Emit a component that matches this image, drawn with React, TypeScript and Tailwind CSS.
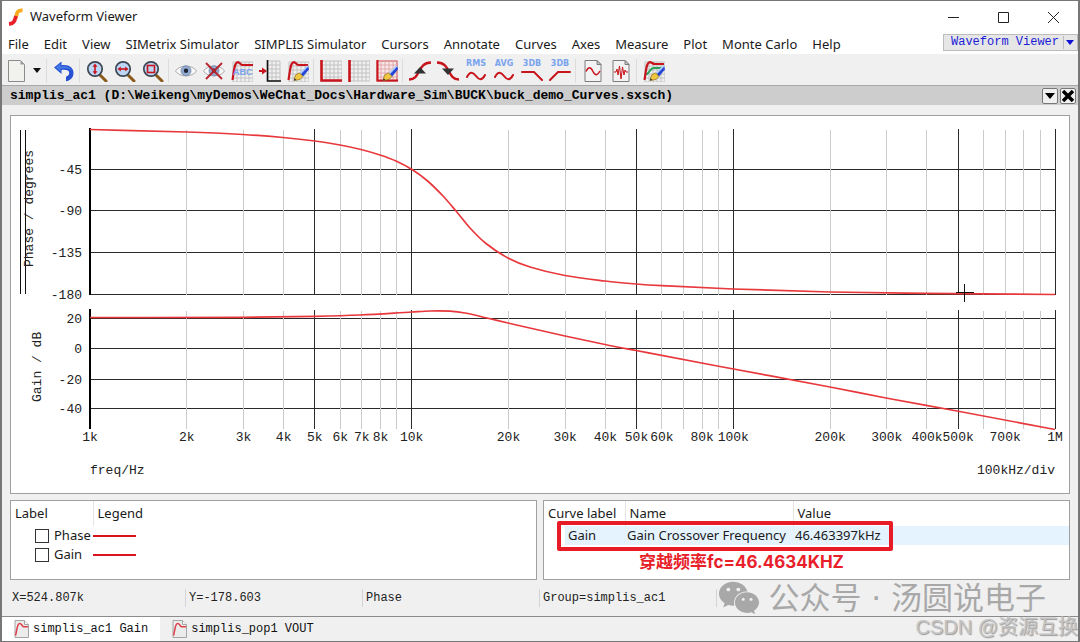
import React from 'react'
import { FaWeixin } from 'react-icons/fa'

const MENUS = [
  'File', 'Edit', 'View', 'SIMetrix Simulator', 'SIMPLIS Simulator', 'Cursors', 'Annotate',
  'Curves', 'Axes', 'Measure', 'Plot', 'Monte Carlo', 'Help',
]

const MONO = "font-['Liberation_Mono',monospace]"
const RED = '#c8141c'
const CURVE = '#e8383c'

/* ---------- toolbar icons, all on a 22x22 box ---------- */

function Icon({ children }: { children: React.ReactNode }) {
  return (
    <svg width="22" height="22" viewBox="0 0 22 22" fill="none">
      {children}
    </svg>
  )
}

function Grid({ x = 2, y = 2, w = 20, h = 20 }: { x?: number; y?: number; w?: number; h?: number }) {
  let d = ''
  for (let i = 0; i <= w; i += 4) d += `M${x + i} ${y}v${h}`
  for (let i = 0; i <= h; i += 4) d += `M${x} ${y + i}h${w}`
  return <path d={d} stroke="#c2c2c2" strokeWidth="1" />
}

function Pencil() {
  return (
    <g>
      <path d="M21 5.500 13 13.500l3 3 6-7z" fill="#2447d8" />
      <path d="M20 5.500 12.500 13l1.300 1.300 7.700-8z" fill="#b4ceff" />
      <path d="M12.500 12.800 8.500 15l-1.500 5.500 6-1 3-3z" fill="#f0c840" stroke="#8a6a20" strokeWidth=".7" />
      <path d="m7 20.500 2.400-.4-1.700-1.800z" fill="#333" />
    </g>
  )
}

function Magnifier({ children }: { children: React.ReactNode }) {
  return (
    <Icon>
      <path d="m14.500 15.500 5.500 5.500" stroke="#8a5a1c" strokeWidth="3" strokeLinecap="round" />
      <circle cx="9" cy="9" r="7.200" fill="#bcd6f5" stroke="#3c4650" strokeWidth="1.700" />
      {children}
    </Icon>
  )
}

function Eye() {
  return (
    <g>
      <path d="M.5 11c4-6.500 17-6.500 21 0c-4 6.500-17 6.500-21 0z" fill="#fafafa" stroke="#a9a9a9" strokeWidth="1" />
      <circle cx="11" cy="10.800" r="5" fill="#93abd2" stroke="#7487a8" strokeWidth=".8" />
      <circle cx="11" cy="10.800" r="2.200" fill="#1c2433" />
    </g>
  )
}

function Page({ children }: { children: React.ReactNode }) {
  return (
    <Icon>
      <path d="M3 .5h12l4 4v17H3z" fill="#f3f3f3" stroke="#7c7c7c" />
      <path d="M15 .5v4h4z" stroke="#7c7c7c" fill="#ccc" />
      {children}
    </Icon>
  )
}

function Tag({ text, children }: { text: string; children: React.ReactNode }) {
  return (
    <span className="flex h-[22px] w-[22px] flex-col items-center">
      <span className="font-['DejaVu_Sans',sans-serif] text-[8px] leading-[8px] font-bold text-[#7ba4ee]">{text}</span>
      <svg width="22" height="13" viewBox="0 0 22 13" fill="none" stroke={RED} strokeWidth="2" strokeLinecap="round">
        {children}
      </svg>
    </span>
  )
}

const SINE = 'M2 9c3-6 6-5 9-1s6 5 9-1'

const TOOL_GROUPS: { label: string; icon: React.ReactNode }[][] = [
  [
    {
      label: 'Undo',
      icon: (
        <Icon>
          <path d="M1 7.500 8.500 1.500v3.700C16 4.200 20.500 8 20.500 13c0 4.500-3 7.500-7.500 8.300v-4.600c2-.6 3.200-1.900 3.200-3.700 0-2.500-2.500-3.600-7.700-3v4z" fill="#2650d2" />
          <path d="M2.500 7.500 7.500 3.500v3C14 5.800 18 8 18.500 11 15 7.500 11 8.300 7.500 8.800v2.600z" fill="#4478e6" />
        </Icon>
      ),
    },
  ],
  [
    {
      label: 'Zoom Y',
      icon: (
        <Magnifier>
          <path d="M9 5.500v7" stroke={RED} strokeWidth="1.600" />
          <path d="M9 3.500 6.500 6.800h5zM9 14.500l-2.500-3.300h5z" fill={RED} />
        </Magnifier>
      ),
    },
    {
      label: 'Zoom X',
      icon: (
        <Magnifier>
          <path d="M5.500 9h7" stroke={RED} strokeWidth="1.600" />
          <path d="M3.500 9l3.300-2.500v5zM14.500 9l-3.300-2.500v5z" fill={RED} />
        </Magnifier>
      ),
    },
    {
      label: 'Zoom box',
      icon: (
        <Magnifier>
          <rect x="5.500" y="5.500" width="7" height="7" stroke={RED} strokeWidth="1.600" />
        </Magnifier>
      ),
    },
  ],
  [
    { label: 'Show', icon: <Icon><Eye /></Icon> },
    {
      label: 'Hide',
      icon: (
        <Icon>
          <Eye />
          <path d="m3 3 16 16M19 3 3 19" stroke="#b8242a" strokeWidth="1.800" />
        </Icon>
      ),
    },
    {
      label: 'Name curve',
      icon: (
        <Icon>
          <Grid />
          <path d="M1.500 20C3 12 3 3 6.500 2.200 9 2 9 5 12 5h10" stroke={RED} strokeWidth="2.200" />
          <text x="2" y="15" fontSize="9" fontWeight="700" fill="#7ba4ee" fontFamily="Liberation Sans, sans-serif">ABC</text>
        </Icon>
      ),
    },
    {
      label: 'Move curve',
      icon: (
        <Icon>
          <Grid x={9} y={1} w={12} h={20} />
          <path d="M8.500 0v21H22" stroke="#111" strokeWidth="1.600" />
          <path d="M0 11h4" stroke={RED} strokeWidth="2" />
          <path d="M3 7.500 8 11l-5 3.500z" fill={RED} />
        </Icon>
      ),
    },
    {
      label: 'Edit curve',
      icon: (
        <Icon>
          <Grid />
          <path d="M1.500 20C3 12 3 3 6.500 2.200 9 2 9 5 12 5h9" stroke={RED} strokeWidth="2.200" />
          <Pencil />
        </Icon>
      ),
    },
  ],
  [
    {
      label: 'Add axis',
      icon: (
        <Icon>
          <Grid y={1} />
          <path d="M1.500 0v20.500H22" stroke={RED} strokeWidth="2.600" />
        </Icon>
      ),
    },
    {
      label: 'Add Y axis',
      icon: (
        <Icon>
          <Grid y={1} />
          <path d="M1.500 0v22" stroke={RED} strokeWidth="2.600" />
        </Icon>
      ),
    },
    {
      label: 'Edit axis',
      icon: (
        <Icon>
          <rect x="1" y="1" width="20" height="20" fill="#f6e6e6" stroke="#cc4a50" />
          <path d="M5 1v20M9 1v20M13 1v20M17 1v20M1 5h20M1 9h20M1 13h20M1 17h20" stroke="#dfa0a2" strokeWidth=".8" />
          <path d="M1.500 0v20.500H22" stroke={RED} strokeWidth="2" />
          <Pencil />
        </Icon>
      ),
    },
  ],
  [
    {
      label: 'Rise time',
      icon: (
        <Icon>
          <path d="M0 19.500c12 0 8-17 22-17" stroke={RED} strokeWidth="2.400" />
          <path d="m11 7-6 6.500h12z" fill="#333" />
        </Icon>
      ),
    },
    {
      label: 'Fall time',
      icon: (
        <Icon>
          <path d="M0 2.500c14 0 10 17 22 17" stroke={RED} strokeWidth="2.400" />
          <path d="m11 15-6-6.500h12z" fill="#333" />
        </Icon>
      ),
    },
    { label: 'RMS', icon: <Tag text="RMS"><path d={SINE} /></Tag> },
    { label: 'Average', icon: <Tag text="AVG"><path d={SINE} /></Tag> },
    { label: 'Low pass 3dB', icon: <Tag text="3DB"><path d="M1 4h12l8 8" /></Tag> },
    { label: 'High pass 3dB', icon: <Tag text="3DB"><path d="M1 12l8-8h12" /></Tag> },
  ],
  [
    {
      label: 'Plot',
      icon: <Page><path d="M4 11.500c2.500-5 4.500-5 7 0s4.500 4 7-.5" stroke={RED} strokeWidth="1.500" /></Page>,
    },
    {
      label: 'Fourier',
      icon: <Page><path d="M4 12h2l1-3 1 6 1.500-9L11 19l1.500-12L14 15l1-5 1 2h2" stroke={RED} strokeWidth="1" /></Page>,
    },
  ],
  [
    {
      label: 'Edit curves',
      icon: (
        <Icon>
          <Grid />
          <path d="M2 14c4 2 4-6 9-6h10" stroke="#27a35a" strokeWidth="2" />
          <path d="M1.500 20C3 12 3 3 6.500 2.200 9 2 9 4 12 4h9" stroke={RED} strokeWidth="2.200" />
          <Pencil />
        </Icon>
      ),
    },
  ],
]

function Toolbar() {
  return (
    <div className="flex h-[31px] items-center bg-[#f0f0f0] pt-0.5 pl-1">
      <button aria-label="New" className="w-[22px]">
        <svg width="22" height="22" viewBox="0 0 22 22" fill="none">
          <path d="M2.500 .5h12l4 4v17h-16z" fill="#f1f1ee" stroke="#8b8b8b" />
          <path d="M14.500 .5v4h4z" fill="#999" />
        </svg>
      </button>
      <button aria-label="New options" className="ml-1 w-[10px]">
        <svg width="10" height="6" viewBox="0 0 10 6">
          <path d="M1 0h8L5 5z" fill="#111" />
        </svg>
      </button>
      {TOOL_GROUPS.map((group, i) => (
        <div key={i} className="flex items-center">
          <span className="mr-1.5 ml-1 h-6 w-px bg-[#dcdcdc]" />
          <div className="flex gap-1.5">
            {group.map((tool) => (
              <button key={tool.label} aria-label={tool.label}>
                {tool.icon}
              </button>
            ))}
          </div>
        </div>
      ))}
    </div>
  )
}

/* ---------- plots ---------- */

const LEFT = 79
const WIDTH = 965
const RIGHT = LEFT + WIDTH

const fx = (f: number) => LEFT + (WIDTH * Math.log10(f / 1000)) / 3

const MINOR: number[] = []
const MAJOR: number[] = []
for (const decade of [1e3, 1e4, 1e5]) {
  for (let n = 1; n < 10; n++) {
    if (n === 1 && decade === 1e3) continue
    if (n === 1 || n === 5) MAJOR.push(n * decade)
    else MINOR.push(n * decade)
  }
}
MAJOR.push(1e6)

const X_LABELS: [number, string][] = [
  [1e3, '1k'], [2e3, '2k'], [3e3, '3k'], [4e3, '4k'], [5e3, '5k'], [6e3, '6k'], [7e3, '7k'], [8e3, '8k'],
  [1e4, '10k'], [2e4, '20k'], [3e4, '30k'], [4e4, '40k'], [5e4, '50k'], [6e4, '60k'], [8e4, '80k'],
  [1e5, '100k'], [2e5, '200k'], [3e5, '300k'], [4e5, '400k'], [5e5, '500k'], [7e5, '700k'], [1e6, '1M'],
]

const PHASE = [
  [79, 13.5], [176, 16], [232, 18.5], [272, 21.5], [304, 25], [329, 29], [350, 33.5], [369, 39], [385, 45],
  [401, 53.5], [416, 64.5], [432, 80], [445, 95], [459, 112], [475, 127.5], [497, 142], [519, 151],
  [554, 159.5], [594, 165], [625, 168], [651, 169.7], [722, 173], [819, 176], [915, 177.3], [1044, 178.5],
]

const GAIN = [
  [79, 201.5], [232, 201.3], [304, 200.3], [349, 199], [401, 196], [419, 195], [439, 195.2], [454, 197],
  [476, 202], [497, 207], [554, 220], [594, 228.5], [625, 234.5], [709, 250.5], [819, 271], [875, 282],
  [946, 295], [1044, 313.5],
]

function smooth(pts: number[][]) {
  let d = `M${pts[0][0]} ${pts[0][1]}`
  for (let i = 0; i < pts.length - 1; i++) {
    const a = pts[i - 1] ?? pts[i]
    const b = pts[i]
    const c = pts[i + 1]
    const e = pts[i + 2] ?? c
    // tangents scaled to the segment width, so uneven spacing doesn't overshoot
    const dx = (c[0] - b[0]) / 3
    const m1 = (c[1] - a[1]) / (c[0] - a[0])
    const m2 = (e[1] - b[1]) / (e[0] - b[0])
    d += `C${b[0] + dx} ${b[1] + dx * m1} ${c[0] - dx} ${c[1] - dx * m2} ${c[0]} ${c[1]}`
  }
  return d
}

function Plot({ top, bottom, ticks, points }: {
  top: number
  bottom: number
  ticks: [number, string][]
  points: number[][]
}) {
  return (
    <g>
      <g shapeRendering="crispEdges">
        {ticks.map(([y]) => (
          <line key={y} x1={LEFT} x2={RIGHT} y1={y} y2={y} stroke="#2a2a2a" />
        ))}
        {MINOR.map((f) => (
          <line key={f} x1={fx(f)} x2={fx(f)} y1={top + 1} y2={bottom} stroke="#cbcbcb" />
        ))}
        {MAJOR.map((f) => (
          <line key={f} x1={fx(f)} x2={fx(f)} y1={top} y2={bottom} stroke="#2a2a2a" />
        ))}
        <line x1={LEFT} x2={LEFT} y1={top - 1} y2={bottom} stroke="#000" strokeWidth="2" />
      </g>
      {ticks.map(([y, label]) => (
        <text key={label} x="71" y={y + 4} textAnchor="end">{label}</text>
      ))}
      <path d={smooth(points)} fill="none" stroke={CURVE} strokeWidth="1.700" />
    </g>
  )
}

function Chart() {
  return (
    <svg viewBox="0 0 1058 377" className={`block w-full text-[13px] ${MONO}`} fill="#222">
      <Plot
        top={13}
        bottom={179}
        ticks={[[53.5, '-45'], [94.5, '-90'], [136.5, '-135'], [178.5, '-180']]}
        points={PHASE}
      />
      <Plot
        top={194}
        bottom={313}
        ticks={[[202.5, '20'], [232.5, '0'], [263.5, '-20'], [292.5, '-40']]}
        points={GAIN}
      />
      <path d="M9.500 14v164M14.500 14v164" stroke="#111" />
      <text transform="translate(22 151) rotate(-90)">Phase / degrees</text>
      <text transform="translate(30 286) rotate(-90)">Gain / dB</text>
      {X_LABELS.map(([f, label]) => (
        <text key={label} x={fx(f)} y="325" textAnchor="middle">{label}</text>
      ))}
      <text x="79" y="358">freq/Hz</text>
      <text x="1044" y="358" textAnchor="end">100kHz/div</text>
      <path d="M953.500 168v18M945 176.500h18" stroke="#111" />
    </svg>
  )
}

/* ---------- lower panels ---------- */

function LegendPanel() {
  return (
    <div className="h-20 border border-[#a0a0a0] bg-white">
      <table className="w-full table-fixed text-left">
        <colgroup>
          <col className="w-[82px]" />
          <col />
        </colgroup>
        <thead>
          <tr className="h-[25px]">
            <th className="border-r border-[#e5e5e5] pl-1 font-normal">Label</th>
            <th className="pl-1 font-normal">Legend</th>
          </tr>
        </thead>
        <tbody>
          {['Phase', 'Gain'].map((name) => (
            <tr key={name} className="h-[19px]">
              <td className="p-0 pl-6">
                <label className="flex items-center gap-[5px] leading-[19px]">
                  <input type="checkbox" className="h-[14px] w-[14px] shrink-0 appearance-none border border-[#333] bg-white" />
                  {name}
                </label>
              </td>
              <td className="p-0">
                <div className="h-0.5 w-[43px] bg-[#d8141c]" />
              </td>
            </tr>
          ))}
        </tbody>
      </table>
    </div>
  )
}

function MeasurementPanel() {
  return (
    <div className="relative h-20 border border-[#a0a0a0] bg-white">
      <table className="w-full table-fixed text-left whitespace-nowrap">
        <colgroup>
          <col className="w-[81px]" />
          <col className="w-[168px]" />
          <col />
        </colgroup>
        <thead>
          <tr className="h-[25px]">
            <th className="border-r border-[#e5e5e5] pl-1 font-normal">Curve label</th>
            <th className="border-r border-[#e5e5e5] pl-1 font-normal">Name</th>
            <th className="pl-1 font-normal">Value</th>
          </tr>
        </thead>
        <tbody>
          <tr className="h-[19px] bg-[linear-gradient(to_right,transparent_21px,#e5f3ff_21px)]">
            <td className="p-0 pl-6 leading-[19px]">Gain</td>
            <td className="p-0 pl-0.5 leading-[19px]">Gain Crossover Frequency</td>
            <td className="p-0 pl-0.5 leading-[19px]">46.463397kHz</td>
          </tr>
        </tbody>
      </table>
      <div className="absolute top-5 left-[13px] h-[30px] w-[336px] rounded-xs border-4 border-[#e81c27]" />
      <p className="absolute top-[49px] left-[95px] font-['Inter','Noto_Sans_CJK_SC',sans-serif] text-[17px] leading-6 font-bold whitespace-nowrap text-[#e8202a]">
        穿越频率fc=46.4634KHZ
      </p>
    </div>
  )
}

function StatusBar() {
  return (
    <div className={`flex h-9 items-center pl-[7px] text-[12px] text-[#222] ${MONO}`}>
      {['X=524.807k', 'Y=-178.603', 'Phase', 'Group=simplis_ac1'].map((item) => (
        <div key={item} className="h-[18px] w-[177px] border-r border-[#d4d4d4] pl-[3px] leading-[18px]">
          {item}
        </div>
      ))}
    </div>
  )
}

function SheetTabs() {
  return (
    <div className={`flex h-[25px] border-t border-[#8c8c8c] text-[12px] text-[#111] ${MONO}`}>
      {['simplis_ac1 Gain', 'simplis_pop1 VOUT'].map((name, i) => (
        <button key={name} className={`flex items-center gap-1 px-3 ${i === 0 ? 'bg-white' : 'bg-[#f0f0f0]'}`}>
          <svg width="15" height="18" viewBox="0 0 15 18" fill="none">
            <path d="M1 .5h9.500l4 4v13H1z" fill="#ececec" stroke="#a4a4a4" />
            <path d="M10.500.5v4h4" stroke="#a4a4a4" fill="#fff" />
            <path d="M1.500 15.500C3 11 3 3.500 5.500 3.500S8 6.800 10 6.800h4" stroke="#dc4048" strokeWidth="1.500" />
          </svg>
          {name}
        </button>
      ))}
    </div>
  )
}

export default function App() {
  return (
    <div className="relative flex min-h-screen flex-col overflow-hidden border-x-2 border-y border-[#777] bg-[#f0f0f0] font-['Noto_Sans','Noto_Sans_CJK_SC',sans-serif] text-[13px] text-[#1a1a1a]">
      <header className="bg-white">
        <div className="flex h-8 items-center justify-between">
          <div className="flex items-center gap-[7px] pl-1.5">
            <svg width="15" height="18" viewBox="0 0 15 18" fill="none">
              <path d="M14.500 2.500C8 2 9.500 6 7.800 9.500" stroke="#f9a91c" strokeWidth="3.800" />
              <path d="M8 8C6.500 13.500 6 15.500 1 16" stroke="#e8202a" strokeWidth="3.800" />
            </svg>
            <h1>Waveform Viewer</h1>
          </div>
          <div className="flex items-center">
            <button aria-label="Minimize" className="flex h-8 w-[50px] items-center justify-center">
              <svg width="11" height="11" stroke="#222"><path d="M0 5.500h11" /></svg>
            </button>
            <button aria-label="Maximize" className="flex h-8 w-[50px] items-center justify-center">
              <svg width="11" height="11" fill="none" stroke="#222"><path d="M.5.5h10v10H.5z" /></svg>
            </button>
            <button aria-label="Close" className="flex h-8 w-[50px] items-center justify-center">
              <svg width="11" height="11" stroke="#222"><path d="m0 0 11 11M11 0 0 11" /></svg>
            </button>
          </div>
        </div>
        <div className="flex h-[21px] items-center justify-between">
          <nav className="flex gap-[15px] pt-0.5 pl-1.5">
            {MENUS.map((menu) => (
              <button key={menu} className="whitespace-nowrap">{menu}</button>
            ))}
          </nav>
          <div className="relative mb-0.5 flex h-[17px] w-[135px] items-center border border-[#bcbcbc] bg-[#e6e6e6]">
            <select aria-label="Window" className={`w-full appearance-none pl-[7px] text-[12px] leading-[15px] text-[#1c1cd8] ${MONO}`}>
              <option>Waveform Viewer</option>
            </select>
            <svg className="pointer-events-none absolute top-0 right-0" width="14" height="15" viewBox="0 0 14 15">
              <path d="M.5 1v13" stroke="#bcbcbc" />
              <path d="M3 5h8l-4 5z" fill="#1010d8" />
            </svg>
          </div>
        </div>
      </header>
      <Toolbar />
      <div className="flex h-5 items-center justify-between border-t border-[#a8a8a8] bg-[#cdcdcd] pr-0.5 pl-2">
        <h2 className={`text-[13px] leading-5 font-bold whitespace-nowrap text-black ${MONO}`}>
          simplis_ac1 (D:\Weikeng\myDemos\WeChat_Docs\Hardware_Sim\BUCK\buck_demo_Curves.sxsch)
        </h2>
        <div className="flex gap-0.5">
          <button aria-label="Graph list" className="flex h-4 w-4 items-center justify-center rounded-xs border border-[#777] bg-[#f0f0f0]">
            <svg width="12" height="6"><path d="M1 0h10L6 6z" /></svg>
          </button>
          <button aria-label="Close graph" className="flex h-4 w-4 items-center justify-center rounded-xs border border-[#777] bg-[#f0f0f0]">
            <svg width="12" height="12" stroke="#000" strokeWidth="3.500"><path d="m1 1 10 10M11 1 1 11" /></svg>
          </button>
        </div>
      </div>
      <main className="grid gap-1.5 px-2 pt-2.5">
        <section className="border border-[#a0a0a0] bg-white">
          <Chart />
        </section>
        <section className="grid grid-cols-2 gap-1.5">
          <LegendPanel />
          <MeasurementPanel />
        </section>
      </main>
      <footer className="relative">
        <StatusBar />
        <SheetTabs />
        <div className="pointer-events-none absolute top-0 right-8 flex h-9 items-center gap-2 text-[#a8a8a8]">
          <FaWeixin size={42} />
          <span className="font-['DejaVu_Sans','Noto_Sans_CJK_SC',sans-serif] text-[31px] leading-8 whitespace-pre">公众号 · 汤圆说电子</span>
        </div>
        <div className="pointer-events-none absolute right-0 bottom-0 font-['Liberation_Sans','Noto_Sans_CJK_SC',sans-serif] text-[20px] leading-7 text-[#c4c4c4] text-shadow-[1px_1px_1px_#999]">
          CSDN @资源互换
        </div>
      </footer>
    </div>
  )
}
